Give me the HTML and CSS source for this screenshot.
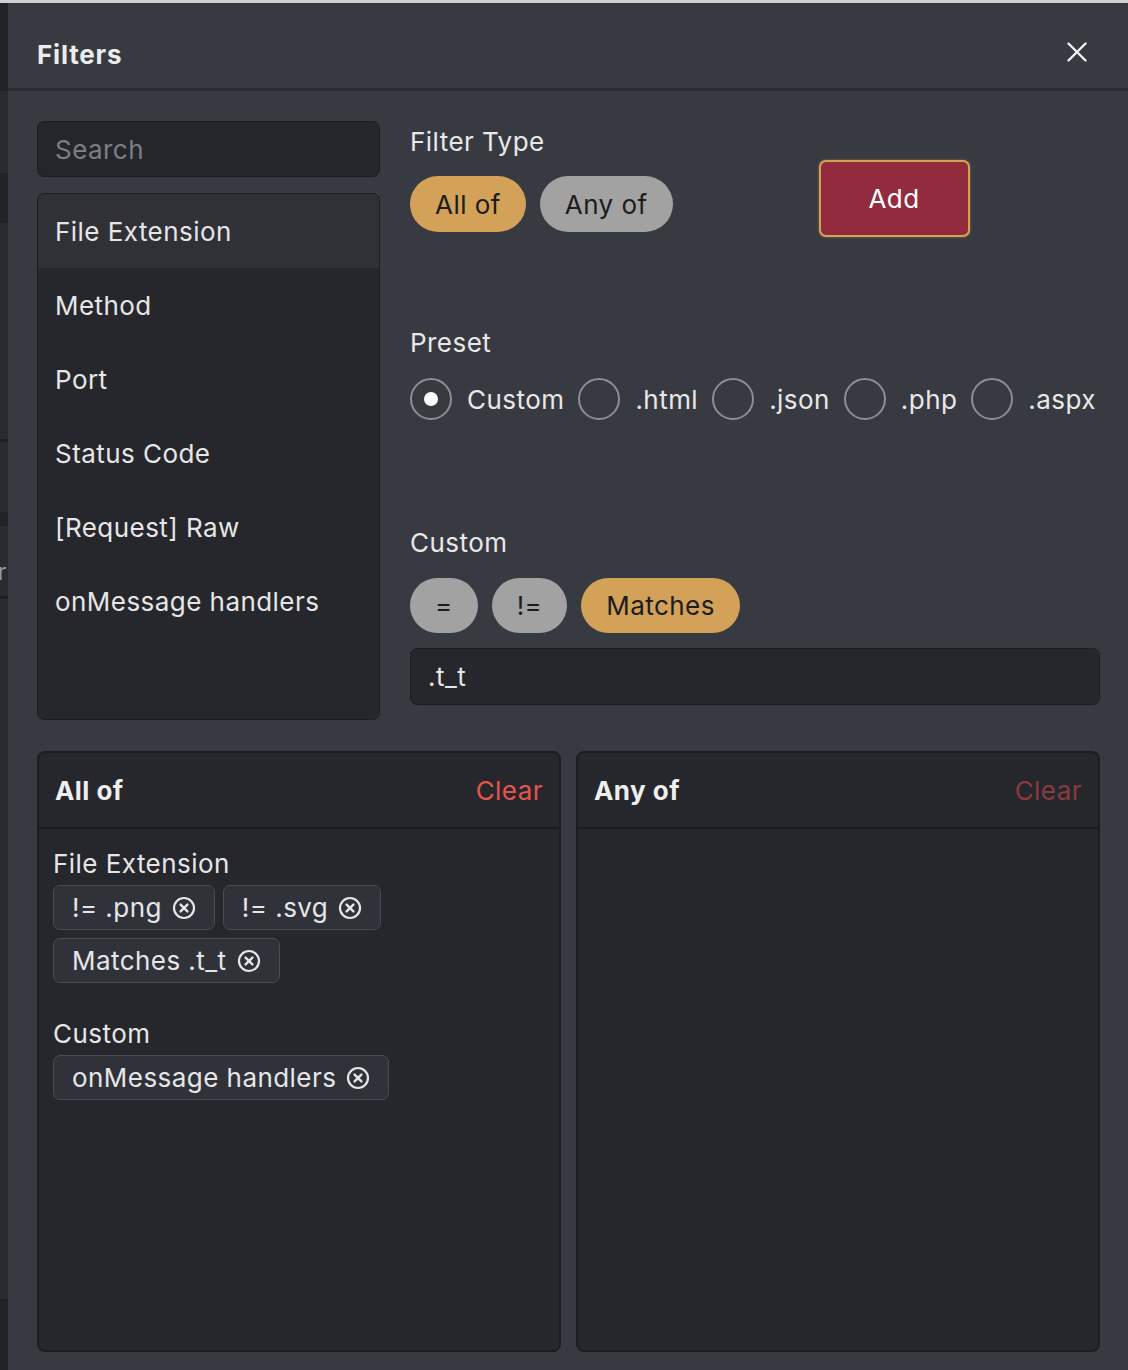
FILE: index.html
```html
<!DOCTYPE html>
<html lang="en">
<head>
<meta charset="utf-8">
<title>Filters</title>
<link rel="stylesheet" href="styles.css">
</head>
<body>
<div class="topline"></div>
<div class="stage">
  <div class="backdrop">
    <div class="seg seg-a"></div>
    <div class="seg seg-b"></div>
    <div class="seg seg-c"></div>
    <div class="seg seg-b tall"></div>
    <div class="seg seg-line"></div>
    <div class="seg seg-b mid"></div>
    <div class="seg seg-c short"></div>
    <div class="seg seg-b mid"><span class="ghost">r</span></div>
    <div class="seg seg-line"></div>
    <div class="seg seg-b fill"></div>
    <div class="seg seg-line"></div>
    <div class="seg seg-c end"></div>
  </div>

  <div class="modal">
    <header class="modal-header">
      <h1 class="modal-title">Filters</h1>
      <button class="close" aria-label="Close">
        <svg width="20" height="20" viewBox="0 0 20 20"><path d="M1.5 1.5 L18.5 18.5 M18.5 1.5 L1.5 18.5" stroke="#f2f2f2" stroke-width="2.4" stroke-linecap="round" fill="none"/></svg>
      </button>
    </header>

    <div class="modal-body">
      <div class="top">
        <div class="left-col">
          <input class="search" type="text" placeholder="Search">
          <ul class="field-list">
            <li class="field active">File Extension</li>
            <li class="field">Method</li>
            <li class="field">Port</li>
            <li class="field">Status Code</li>
            <li class="field">[Request] Raw</li>
            <li class="field">onMessage handlers</li>
          </ul>
        </div>

        <div class="right-col">
          <div class="type-row">
            <div class="section">
              <div class="label">Filter Type</div>
              <div class="pills">
                <span class="pill gold">All of</span>
                <span class="pill gray">Any of</span>
              </div>
            </div>
            <button class="add">Add</button>
          </div>

          <div class="section preset">
            <div class="label">Preset</div>
            <div class="radios">
              <label class="radio"><span class="dot checked"></span>Custom</label>
              <label class="radio"><span class="dot"></span>.html</label>
              <label class="radio"><span class="dot"></span>.json</label>
              <label class="radio"><span class="dot"></span>.php</label>
              <label class="radio"><span class="dot"></span>.aspx</label>
            </div>
          </div>

          <div class="section custom">
            <div class="label">Custom</div>
            <div class="pills">
              <span class="pill gray">=</span>
              <span class="pill gray">!=</span>
              <span class="pill gold">Matches</span>
            </div>
            <div class="value-input">.t_t</div>
          </div>
        </div>
      </div>

      <div class="panels">
        <section class="panel">
          <div class="panel-head">
            <span class="panel-title">All of</span>
            <span class="clear">Clear</span>
          </div>
          <div class="panel-body">
            <div class="group-label">File Extension</div>
            <div class="chips">
              <span class="chip">!= .png <svg class="x" viewBox="0 0 24 24"><circle cx="12" cy="12" r="10" fill="none" stroke="#e6e6e6" stroke-width="2.2"/><path d="M8.6 8.6 L15.4 15.4 M15.4 8.6 L8.6 15.4" stroke="#e6e6e6" stroke-width="2.4" stroke-linecap="round"/></svg></span>
              <span class="chip">!= .svg <svg class="x" viewBox="0 0 24 24"><circle cx="12" cy="12" r="10" fill="none" stroke="#e6e6e6" stroke-width="2.2"/><path d="M8.6 8.6 L15.4 15.4 M15.4 8.6 L8.6 15.4" stroke="#e6e6e6" stroke-width="2.4" stroke-linecap="round"/></svg></span>
              <span class="chip">Matches .t_t <svg class="x" viewBox="0 0 24 24"><circle cx="12" cy="12" r="10" fill="none" stroke="#e6e6e6" stroke-width="2.2"/><path d="M8.6 8.6 L15.4 15.4 M15.4 8.6 L8.6 15.4" stroke="#e6e6e6" stroke-width="2.4" stroke-linecap="round"/></svg></span>
            </div>
            <div class="group-label spaced">Custom</div>
            <div class="chips">
              <span class="chip">onMessage handlers <svg class="x" viewBox="0 0 24 24"><circle cx="12" cy="12" r="10" fill="none" stroke="#e6e6e6" stroke-width="2.2"/><path d="M8.6 8.6 L15.4 15.4 M15.4 8.6 L8.6 15.4" stroke="#e6e6e6" stroke-width="2.4" stroke-linecap="round"/></svg></span>
            </div>
          </div>
        </section>

        <section class="panel">
          <div class="panel-head">
            <span class="panel-title">Any of</span>
            <span class="clear disabled">Clear</span>
          </div>
          <div class="panel-body"></div>
        </section>
      </div>
    </div>
  </div>
</div>
</body>
</html>
```

FILE: styles.css
```css
* { box-sizing: border-box; }

html, body {
  margin: 0;
  padding: 0;
  height: 1370px;
  overflow: hidden;
  background: #26282d;
  font-family: "Inter", "Noto Sans", "Liberation Sans", sans-serif;
  color: #e6e6e6;
  letter-spacing: 0.45px;
}

.topline {
  height: 3px;
  background: #d0d0d0;
}

.stage {
  display: flex;
  height: 1367px;
}

/* backdrop strip (app behind the modal) */
.backdrop {
  width: 8px;
  flex: none;
  display: flex;
  flex-direction: column;
  overflow: hidden;
}
.seg { flex: none; position: relative; overflow: hidden; }
.seg-a { height: 88px; background: #212226; }
.seg-b { height: 82px; background: #2a2b30; }
.seg-c { height: 50px; background: #222327; }
.seg-b.tall { height: 216px; }
.seg-b.mid { height: 70px; }
.seg-c.short { height: 14px; }
.seg-b.fill { height: 700px; }
.seg-c.end { flex: 1; height: auto; }
.seg-line { height: 3px; background: #1e1f23; }
.ghost {
  position: absolute;
  right: 1px;
  top: 34px;
  font-size: 24px;
  line-height: 24px;
  color: #8d9ca2;
}

/* modal */
.modal {
  flex: 1;
  background: #383a42;
  display: flex;
  flex-direction: column;
}

.modal-header {
  height: 88px;
  flex: none;
  display: flex;
  align-items: center;
  justify-content: space-between;
  padding: 17px 28px 0 29px;
  border-bottom: 3px solid #2b2c31;
}
.modal-title {
  margin: 0;
  font-size: 26px;
  font-weight: 700;
  color: #ececec;
  letter-spacing: 0.8px;
}
.close {
  background: none;
  border: none;
  padding: 0;
  margin-right: 13px;
  margin-top: -4px;
  width: 20px;
  height: 20px;
  display: flex;
}

.modal-body {
  padding: 30px 28px 0 29px;
  flex: 1;
  display: flex;
  flex-direction: column;
}

.top {
  display: flex;
  gap: 30px;
}

.left-col {
  width: 343px;
  flex: none;
  display: flex;
  flex-direction: column;
  gap: 16px;
}

.search {
  height: 56px;
  width: 100%;
  background: #25262b;
  border: 1.5px solid #1c1d21;
  border-radius: 7px;
  padding: 0 17px;
  font-family: inherit;
  font-size: 26px;
  letter-spacing: 0.45px;
  color: #e6e6e6;
  outline: none;
}
.search::placeholder { color: #7d7e84; }

.field-list {
  list-style: none;
  margin: 0;
  padding: 0;
  height: 527px;
  background: #26272c;
  border: 1.5px solid #1c1d21;
  border-radius: 7px;
  overflow: hidden;
}
.field {
  height: 74px;
  display: flex;
  align-items: center;
  padding-left: 17px;
  font-size: 26px;
  color: #e6e6e6;
}
.field.active {
  background: #303137;
}

.right-col {
  flex: 1;
  display: flex;
  flex-direction: column;
}

.label {
  font-size: 26px;
  line-height: 36px;
  color: #e8e8e8;
}

.type-row {
  display: flex;
  align-items: flex-start;
}
.type-row .section { padding-top: 3px; }

.pills {
  display: flex;
  gap: 14px;
  margin-top: 16px;
}
.pill {
  height: 56px;
  padding: 0 25px;
  border-radius: 28px;
  display: inline-flex;
  align-items: center;
  font-size: 26px;
  color: #1c1c1c;
}
.pill.gold { background: #d3a158; }
.pill.gray { background: #a2a2a2; }

.add {
  margin-top: 39px;
  margin-left: 146px;
  width: 151px;
  height: 77px;
  background: #932b3f;
  border: 2px solid #d6a252;
  border-radius: 7px;
  color: #ffffff;
  font-family: inherit;
  font-size: 26px;
  letter-spacing: 0.45px;
  box-shadow: 0 0 3px rgba(214, 162, 82, 0.5);
}

.preset { margin-top: 88px; }

.radios {
  display: flex;
  align-items: center;
  gap: 14px;
  margin-top: 17px;
  white-space: nowrap;
}
.radio {
  display: inline-flex;
  align-items: center;
  gap: 15px;
  font-size: 26px;
  color: #e8e8e8;
}
.dot {
  width: 42px;
  height: 42px;
  border-radius: 50%;
  border: 2px solid #8d8e92;
  display: inline-flex;
  align-items: center;
  justify-content: center;
  flex: none;
}
.dot.checked::after {
  content: "";
  width: 14px;
  height: 14px;
  border-radius: 50%;
  background: #ffffff;
}

.custom { margin-top: 105px; }
.custom .pills { margin-top: 17px; }
.custom .pill { height: 55px; }

.value-input {
  margin-top: 15px;
  height: 57px;
  background: #26272c;
  border: 1.5px solid #1c1d21;
  border-radius: 7px;
  display: flex;
  align-items: center;
  padding-left: 17px;
  font-size: 26px;
  color: #e6e6e6;
}

/* bottom panels */
.panels {
  margin-top: 31px;
  height: 601px;
  display: grid;
  grid-template-columns: 1fr 1fr;
  gap: 15px;
}
.panel {
  background: #26272c;
  border: 2px solid #1d1e22;
  border-radius: 8px;
  display: flex;
  flex-direction: column;
  overflow: hidden;
}
.panel-head {
  height: 76px;
  flex: none;
  display: flex;
  align-items: center;
  justify-content: space-between;
  padding: 0 16px 0 16px;
  border-bottom: 2px solid #1b1c20;
  font-size: 26px;
}
.panel-title {
  font-weight: 700;
  color: #eeeeee;
}
.clear { color: #e4554e; }
.clear.disabled { color: #8b3a3f; }

.panel-body {
  padding: 19px 14px;
  flex: 1;
}
.group-label {
  font-size: 26px;
  line-height: 32px;
  color: #e6e6e6;
}
.group-label.spaced { margin-top: 35px; }

.chips {
  display: flex;
  flex-wrap: wrap;
  gap: 8px;
  margin-top: 5px;
}
.chip {
  height: 45px;
  display: inline-flex;
  align-items: center;
  gap: 10px;
  padding: 0 18px;
  background: #30323a;
  border: 1.5px solid #4a4c53;
  border-radius: 7px;
  font-size: 26px;
  color: #e6e6e6;
  white-space: nowrap;
}
.chip .x {
  width: 24px;
  height: 24px;
  flex: none;
}
```
